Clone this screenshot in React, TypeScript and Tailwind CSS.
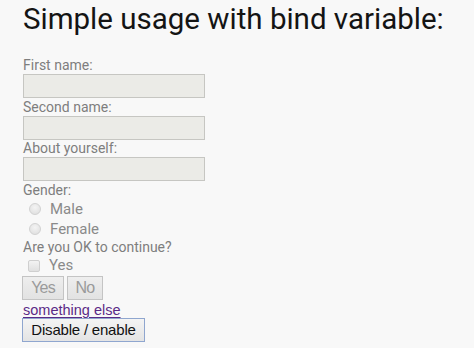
import React from "react";

function Radio() {
  return (
    <span className="inline-block w-[12px] h-[12px] rounded-full border border-[#d2d2d2] bg-[radial-gradient(circle_at_50%_35%,#f4f4f4,#dcdcdc)]" />
  );
}

export default function App() {
  return (
    <div className="w-[474px] h-[348px] overflow-hidden bg-[#f8f8f8] font-['Roboto',sans-serif] pl-[23px]">
      <h1 className="text-[29.5px] leading-[36px] pt-[1px] text-[#141414] font-normal">
        Simple usage with bind variable:
      </h1>
      <div className="mt-[20px] flex flex-col items-start text-[14px] text-[#7e7e7e]">
        <div className="leading-[17px]">First name:</div>
        <div className="w-[182px] h-[24px] border border-[#c6c6c2] bg-[#ebebe7]" />
        <div className="leading-[17px] mt-[1px]">Second name:</div>
        <div className="w-[182px] h-[24px] border border-[#c6c6c2] bg-[#ebebe7]" />
        <div className="leading-[17px]">About yourself:</div>
        <div className="w-[182px] h-[24px] border border-[#c6c6c2] bg-[#ebebe7]" />
        <div className="leading-[17px] mt-[1px]">Gender:</div>
        <div className="flex items-center h-[20px] pl-[6px] gap-[9px] text-[15px] text-[#8a8a8a]">
          <Radio />
          <span>Male</span>
        </div>
        <div className="flex items-center h-[20px] pl-[6px] gap-[9px] text-[15px] text-[#8a8a8a]">
          <Radio />
          <span>Female</span>
        </div>
        <div className="leading-[17px]">Are you OK to continue?</div>
        <div className="flex items-center h-[19px] pl-[5px] gap-[9px] text-[15px] text-[#8a8a8a]">
          <span className="inline-block w-[12px] h-[12px] rounded-[2px] border border-[#cfcfcf] bg-[linear-gradient(#f3f3f3,#e0e0e0)]" />
          <span>Yes</span>
        </div>
        <div className="flex gap-[3px] -ml-[1px] mt-[1px] font-['Liberation_Sans',sans-serif] text-[16px] tracking-[-0.8px] text-[#9a9a9a]">
          <div className="w-[42px] h-[24px] flex items-center justify-center border border-[#c4c4c4] bg-[linear-gradient(#eeeeee,#e2e2e2)]">
            Yes
          </div>
          <div className="w-[36px] h-[24px] flex items-center justify-center border border-[#c4c4c4] bg-[linear-gradient(#eeeeee,#e2e2e2)]">
            No
          </div>
        </div>
        <a className="mt-[2px] leading-[16px] font-['Liberation_Sans',sans-serif] text-[14.5px] text-[#5b2a86] underline underline-offset-[2px]">
          something else
        </a>
        <div className="-ml-[1px] mt-[0px] w-[123px] h-[24px] flex items-center justify-center border border-[#8fa6cf] bg-[linear-gradient(#f4f4f4,#e4e4e4)] font-['Liberation_Sans',sans-serif] text-[15px] tracking-[-0.2px] text-[#111]">
          Disable / enable
        </div>
      </div>
    </div>
  );
}
